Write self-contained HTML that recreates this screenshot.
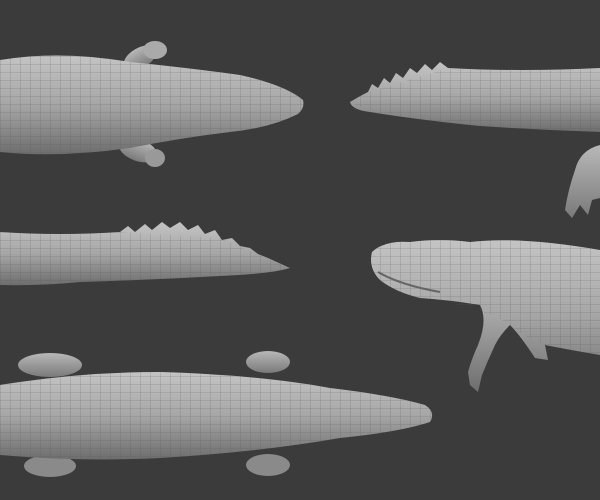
<!DOCTYPE html>
<html><head><meta charset="utf-8"><style>
html,body{margin:0;padding:0;background:#3b3b3b;}
svg{display:block}
</style></head><body>
<svg width="600" height="500" viewBox="0 0 600 500" xmlns="http://www.w3.org/2000/svg">
<defs>
<linearGradient id="g" x1="0" y1="0" x2="0" y2="1">
<stop offset="0" stop-color="#c4c4c4"/><stop offset="0.5" stop-color="#a6a6a6"/><stop offset="1" stop-color="#6e6e6e"/>
</linearGradient>
<linearGradient id="g2" x1="0" y1="0" x2="0" y2="1">
<stop offset="0" stop-color="#b8b8b8"/><stop offset="1" stop-color="#7a7a7a"/>
</linearGradient>
<pattern id="sc" width="10" height="8" patternUnits="userSpaceOnUse">
<path d="M0 0H10M0 0V8" stroke="#555" stroke-width="0.8" opacity="0.45" fill="none"/>
</pattern>
</defs>
<rect width="600" height="500" fill="#3b3b3b"/>

<g>
<ellipse cx="140" cy="58" rx="18" ry="10" fill="url(#g2)" transform="rotate(-30 140 58)"/>
<ellipse cx="155" cy="50" rx="12" ry="9" fill="#aaa"/>
<ellipse cx="138" cy="150" rx="20" ry="11" fill="url(#g2)" transform="rotate(20 138 150)"/>
<ellipse cx="155" cy="158" rx="10" ry="9" fill="#999"/>
<path d="M0 60 Q60 50 130 62 Q190 68 240 75 Q285 85 303 100 Q305 108 298 114 Q270 128 230 132 Q180 138 130 148 Q60 158 0 152 Z" fill="url(#g)"/>
<path d="M0 60 Q60 50 130 62 Q190 68 240 75 Q285 85 303 100 Q305 108 298 114 Q270 128 230 132 Q180 138 130 148 Q60 158 0 152 Z" fill="url(#sc)"/>
</g>

<g>
<path d="M350 102 Q360 96 368 92 L372 84 L378 88 L384 78 L390 83 L396 73 L403 78 L410 68 L417 73 L425 64 L432 70 L440 62 L448 68 Q520 72 600 68 L600 132 Q540 130 480 126 Q420 120 370 112 Q352 110 350 102 Z" fill="url(#g)"/>
<path d="M350 102 Q360 96 368 92 L448 68 Q520 72 600 68 L600 132 Q540 130 480 126 Q420 120 370 112 Z" fill="url(#sc)"/>
<path d="M600 145 Q580 150 575 170 Q568 190 565 210 L572 218 L580 205 L588 215 L592 200 L600 198 Z" fill="url(#g2)"/>
</g>

<g>
<path d="M0 232 Q60 236 120 232 L128 226 L135 232 L145 224 L152 230 L162 222 L170 228 L180 222 L188 230 L198 225 L205 234 L215 230 L222 240 L232 238 L240 246 L250 248 L258 254 L268 258 L290 268 Q270 274 220 276 Q150 280 80 282 Q40 286 0 285 Z" fill="url(#g)"/>
<path d="M0 232 Q60 236 120 232 L220 238 L290 268 Q270 274 220 276 Q150 280 80 282 Q40 286 0 285 Z" fill="url(#sc)"/>
</g>

<g>
<path d="M372 252 Q385 240 410 242 Q440 238 470 242 Q520 236 600 250 L600 355 Q570 350 545 345 L548 360 L535 358 Q520 335 510 325 Q500 335 495 345 Q488 360 482 375 L478 392 L470 385 L468 372 Q472 358 478 345 Q488 320 480 305 Q450 300 420 298 Q395 292 380 280 Q368 268 372 252 Z" fill="url(#g)"/>
<path d="M372 252 Q385 240 410 242 Q440 238 470 242 Q520 236 600 250 L600 355 Q570 350 545 345 Q520 335 510 325 Q480 305 420 298 Q395 292 380 280 Q368 268 372 252 Z" fill="url(#sc)"/>
<path d="M378 272 Q400 285 440 292" stroke="#666" stroke-width="2" fill="none"/>
</g>

<g>
<ellipse cx="50" cy="365" rx="32" ry="12" fill="url(#g2)"/>
<ellipse cx="268" cy="362" rx="22" ry="11" fill="url(#g2)"/>
<ellipse cx="50" cy="466" rx="26" ry="11" fill="#8a8a8a"/>
<ellipse cx="268" cy="465" rx="22" ry="11" fill="#8a8a8a"/>
<path d="M0 385 Q80 372 160 372 Q260 375 330 388 Q390 395 425 405 Q436 412 430 422 Q400 432 340 438 Q260 452 160 458 Q80 462 0 455 Z" fill="url(#g)"/>
<path d="M0 385 Q80 372 160 372 Q260 375 330 388 Q390 395 425 405 Q436 412 430 422 Q400 432 340 438 Q260 452 160 458 Q80 462 0 455 Z" fill="url(#sc)"/>
</g>
</svg>
</body></html>
